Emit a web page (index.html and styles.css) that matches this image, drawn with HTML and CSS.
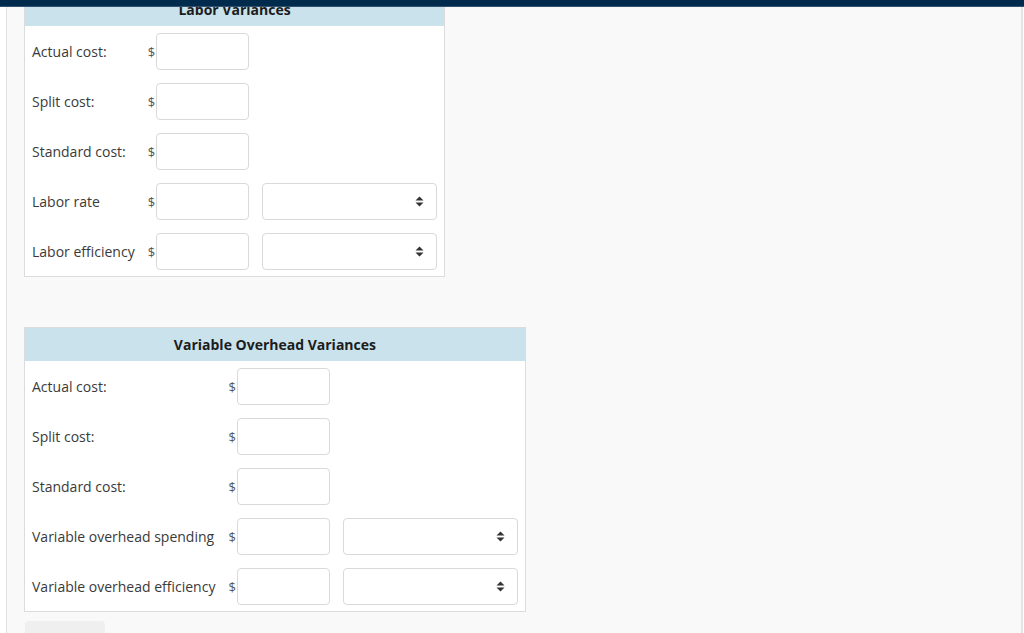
FILE: index.html
```html
<!DOCTYPE html>
<html lang="en">
<head>
    <meta charset="UTF-8">
    <meta name="viewport" content="width=device-width, initial-scale=1.0">
    <title>Variances</title>
    <link rel="stylesheet" href="styles.css">
</head>
<body>
    <div class="top-bar"></div>

    <div class="page">
        <div class="panel">
            <div class="panel-header">Labor Variances</div>
            <div class="panel-body">
                <div class="label">Actual cost:</div>
                <div class="dollar">$</div>
                <div class="field"></div>
                <div class="empty"></div>

                <div class="label">Split cost:</div>
                <div class="dollar">$</div>
                <div class="field"></div>
                <div class="empty"></div>

                <div class="label">Standard cost:</div>
                <div class="dollar">$</div>
                <div class="field"></div>
                <div class="empty"></div>

                <div class="label">Labor rate</div>
                <div class="dollar">$</div>
                <div class="field"></div>
                <div class="select">
                    <svg width="9" height="11" viewBox="0 0 9 11"><path d="M0.5 4.5 L4.5 0.5 L8.5 4.5 Z M0.5 6.5 L8.5 6.5 L4.5 10.5 Z" fill="#333"/></svg>
                </div>

                <div class="label">Labor efficiency</div>
                <div class="dollar">$</div>
                <div class="field"></div>
                <div class="select">
                    <svg width="9" height="11" viewBox="0 0 9 11"><path d="M0.5 4.5 L4.5 0.5 L8.5 4.5 Z M0.5 6.5 L8.5 6.5 L4.5 10.5 Z" fill="#333"/></svg>
                </div>
            </div>
        </div>

        <div class="panel">
            <div class="panel-header">Variable Overhead Variances</div>
            <div class="panel-body">
                <div class="label">Actual cost:</div>
                <div class="dollar">$</div>
                <div class="field"></div>
                <div class="empty"></div>

                <div class="label">Split cost:</div>
                <div class="dollar">$</div>
                <div class="field"></div>
                <div class="empty"></div>

                <div class="label">Standard cost:</div>
                <div class="dollar">$</div>
                <div class="field"></div>
                <div class="empty"></div>

                <div class="label">Variable overhead spending</div>
                <div class="dollar">$</div>
                <div class="field"></div>
                <div class="select">
                    <svg width="9" height="11" viewBox="0 0 9 11"><path d="M0.5 4.5 L4.5 0.5 L8.5 4.5 Z M0.5 6.5 L8.5 6.5 L4.5 10.5 Z" fill="#333"/></svg>
                </div>

                <div class="label">Variable overhead efficiency</div>
                <div class="dollar">$</div>
                <div class="field"></div>
                <div class="select">
                    <svg width="9" height="11" viewBox="0 0 9 11"><path d="M0.5 4.5 L4.5 0.5 L8.5 4.5 Z M0.5 6.5 L8.5 6.5 L4.5 10.5 Z" fill="#333"/></svg>
                </div>
            </div>
        </div>

        <div class="button-row">
            <div class="button"></div>
        </div>
    </div>
</body>
</html>
```

FILE: styles.css
```css
* {
    box-sizing: border-box;
}

body {
    font-family: 'Open Sans', 'Liberation Sans', sans-serif;
    font-size: 14px;
    color: #333;
    background-color: #fff;
    margin: 0;
    height: 633px;
    overflow: hidden;
}

/* barra superior fija, tapa parte del primer panel */
.top-bar {
    position: fixed;
    top: 0;
    left: 0;
    right: 0;
    height: 7px;
    background-color: #012b4d;
    border-bottom: 1px solid #2f5273;
    z-index: 5;
}

.page {
    margin-left: 6px;
    width: 1017px;
    border-left: 1px solid #e2e2e2;
    border-right: 2px solid #e4e4e4;
    background-color: #f9f9f9;
    padding: 0 0 0 17px;
    margin-top: -8px; /* la página está desplazada un poco hacia abajo */
    min-height: 660px;
}

.panel {
    width: max-content;
    background-color: #fff;
    border: 1px solid #dcdcdc;
    margin-bottom: 50px;
}

.panel-header {
    background-color: #c9e2ec;
    height: 33px;
    line-height: 33px;
    text-align: center;
    font-weight: bold;
    color: #1c1c1c;
}

.panel-body {
    display: grid;
    grid-template-columns: max-content max-content 93px 188px;
    row-gap: 13px;
    align-items: center;
    padding: 7px 7px 6px 7px;
}

.label {
    padding-right: 13px;
    color: #3a3a3a;
}

.dollar {
    font-size: 13px;
    color: #555;
    padding-right: 1px;
}

.field {
    height: 37px;
    border: 1px solid #d9d9d9;
    border-radius: 4px;
    background-color: #fff;
}

.select {
    height: 37px;
    margin-left: 13px;
    border: 1px solid #d9d9d9;
    border-radius: 4px;
    background-color: #fff;
    display: flex;
    align-items: center;
    justify-content: flex-end;
    padding-right: 12px;
}

.button-row {
    margin-top: -41px;
    padding-left: 1px;
}

.button {
    width: 80px;
    height: 30px;
    background-color: #efefef;
    border-radius: 4px;
}
```
